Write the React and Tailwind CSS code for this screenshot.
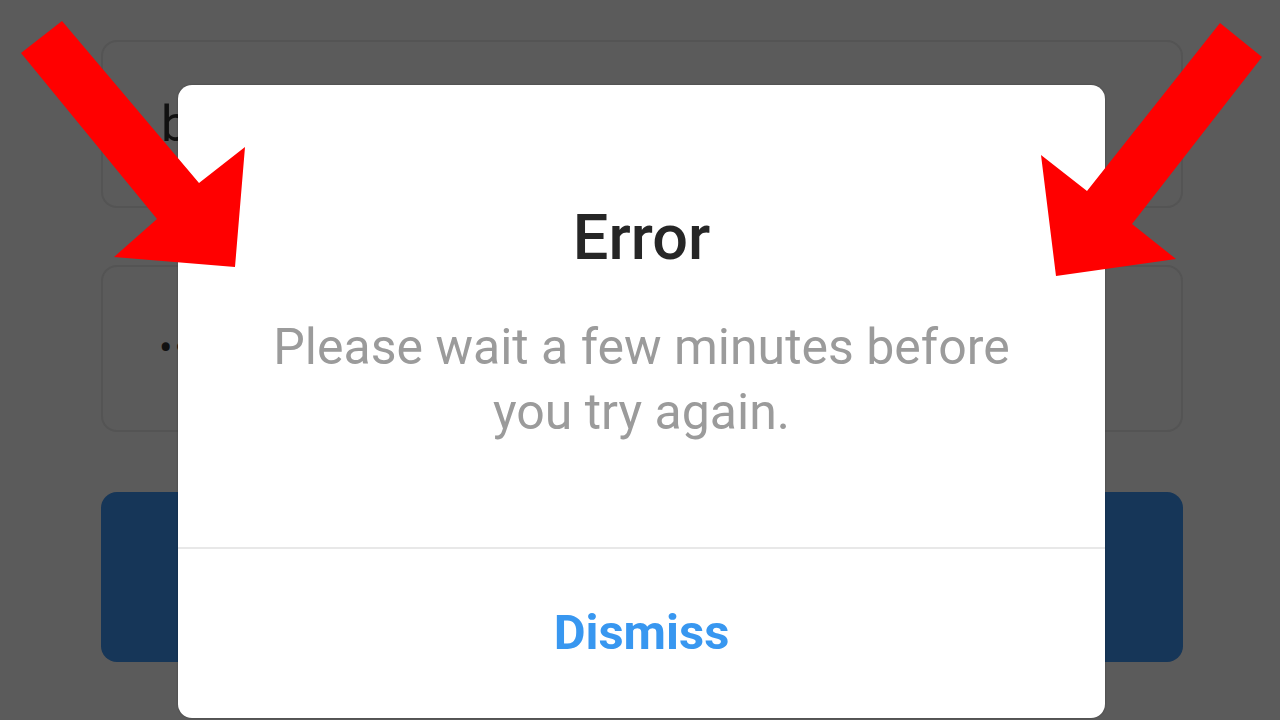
export default function App() {
  return (
    <div className="relative h-[720px] w-[1280px] overflow-hidden bg-[#5b5b5b] font-['Roboto',sans-serif]">
      {/* dimmed login form behind the dialog */}
      <div className="flex flex-col pl-[101px] pr-[97px] pt-[40px]">
        <div className="flex h-[168px] items-center rounded-[16px] border-2 border-[#545454] px-[58px]">
          <span className="text-[50px] leading-none text-[#111]">b</span>
        </div>
        <div className="mt-[57px] flex h-[167px] items-center rounded-[16px] border-2 border-[#545454] px-[56px]">
          <span className="text-[40px] leading-none tracking-[2px] text-[#111]">••••••••</span>
        </div>
        <div className="mt-[60px] h-[170px] rounded-[16px] bg-[#163658]" />
      </div>

      {/* dialog */}
      <div className="absolute left-[178px] top-[85px] flex h-[633px] w-[927px] flex-col rounded-[14px] bg-white shadow-[0_0_2px_rgba(0,0,0,0.3)]">
        <div className="flex h-[462px] flex-col items-center pt-[121px]">
          <h1 className="text-[63px] font-medium leading-none text-[#262626]">Error</h1>
          <p className="mt-[46px] text-center text-[50px] leading-[65px] text-[#9b9b9b]">
            Please wait a few minutes before
            <br />
            you try again.
          </p>
        </div>
        <div className="h-[2px] bg-[#e8e8e8]" />
        <div className="flex flex-1 items-center justify-center pb-[2px]">
          <span className="text-[49px] font-bold text-[#3897f0]">Dismiss</span>
        </div>
      </div>

      {/* red arrows */}
      <svg className="absolute left-0 top-0" width="1280" height="720" viewBox="0 0 1280 720">
        <polygon
          fill="#ff0000"
          points="62,21 199,183 245,147 235,267 114,257 157,219 21,53"
        />
        <polygon
          fill="#ff0000"
          points="1220,23 1087,191 1041,155 1056,276 1176,259 1132,224 1262,57"
        />
      </svg>
    </div>
  );
}
